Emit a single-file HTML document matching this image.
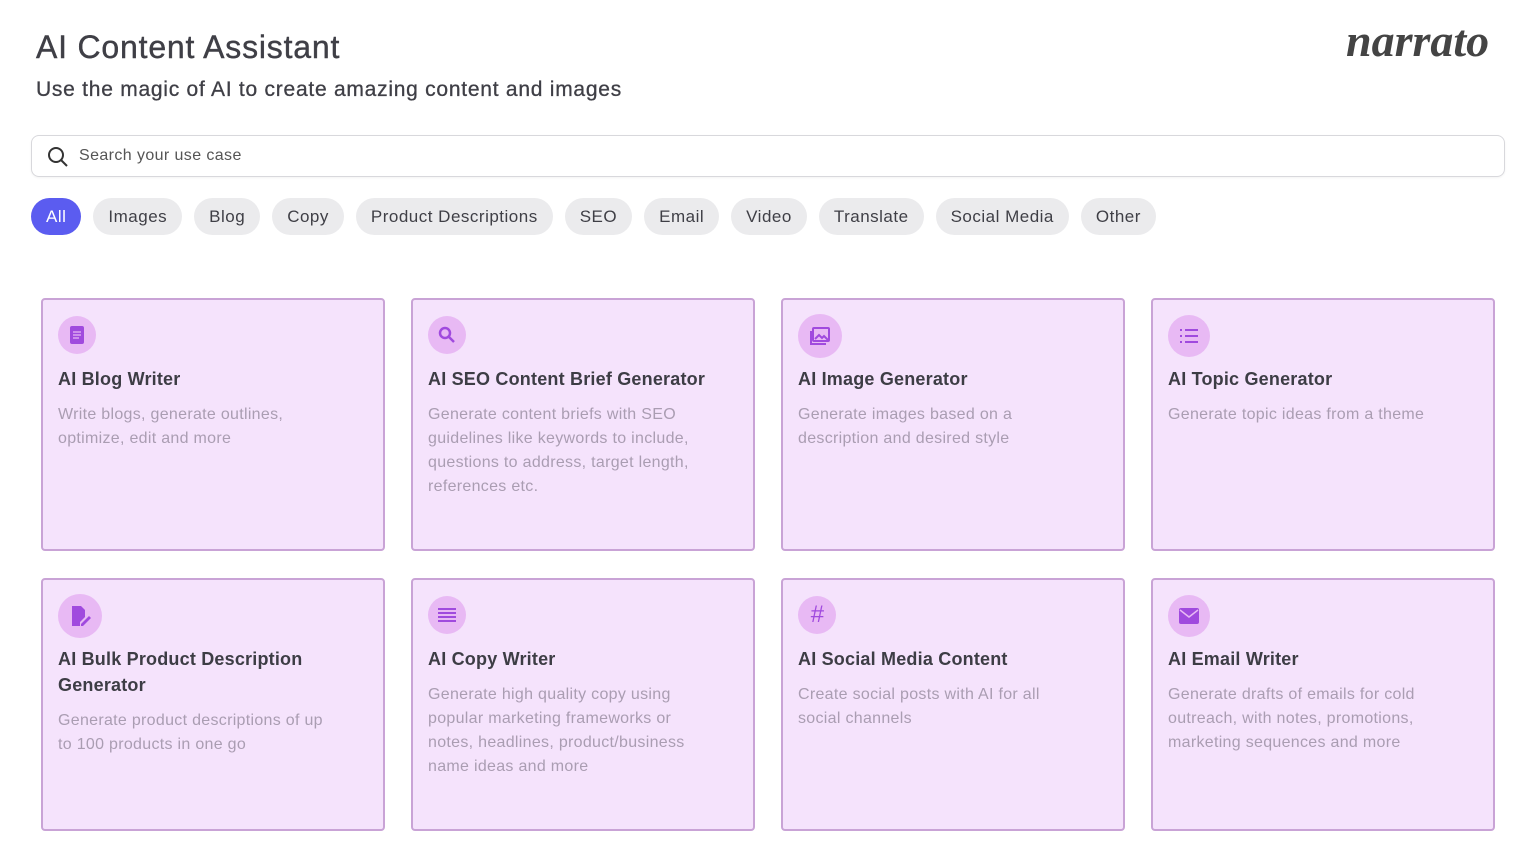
<!DOCTYPE html>
<html><head><meta charset="utf-8"><style>
*{box-sizing:border-box;margin:0;padding:0}
body{width:1536px;height:864px;background:#fff;font-family:"Liberation Sans",sans-serif;position:relative;overflow:hidden;color:#3d3d45}
h1{position:absolute;left:36px;top:29px;font-size:32px;font-weight:normal;color:#3f3f46;letter-spacing:0.8px;-webkit-text-stroke:0.4px #3f3f46}
.sub{position:absolute;left:36px;top:78px;font-size:21px;color:#3f3f46;letter-spacing:0.75px;-webkit-text-stroke:0.3px #3f3f46}
.logo{position:absolute;left:1346px;top:14px;font-family:"Liberation Serif",serif;font-style:italic;font-weight:bold;font-size:46px;color:#444;letter-spacing:0px}
.search{position:absolute;left:31px;top:135px;width:1474px;height:42px;border:1px solid #d8d8dc;border-radius:8px;box-shadow:0 1px 2px rgba(0,0,0,.05)}
.search span{position:absolute;left:47px;top:11px;font-size:16px;color:#555;letter-spacing:0.4px}
.search svg{position:absolute;left:14px;top:9px}
.tabs{position:absolute;left:31px;top:198px;display:flex;gap:12px}
.tab{height:37px;padding:0 15px;border-radius:19px;background:#ebebed;font-size:17px;line-height:37px;color:#3f3f46;letter-spacing:0.5px}
.tab.on{background:#5b5cf0;color:#fff;padding:0 15px}
.card{position:absolute;width:344px;height:253px;background:#f5e3fc;border:2px solid #c9a3d6;border-radius:4px;padding:16px 15px}
.icw{height:38px;position:relative}
.ic{position:absolute;left:0;top:0;width:38px;height:38px;border-radius:50%;background:#e8b9f4;display:flex;align-items:center;justify-content:center}
.card h3{font-size:18px;font-weight:bold;color:#3d3d45;margin-top:12px;line-height:26px;letter-spacing:0.2px;width:280px}
.card p{font-size:16px;color:#aa9db2;line-height:24px;margin-top:11px;letter-spacing:0.3px;width:300px}
</style></head><body>
<h1>AI Content Assistant</h1>
<div class="sub">Use the magic of AI to create amazing content and images</div>
<div class="logo">narrato</div>
<div class="search"><svg width="24" height="24" viewBox="0 0 24 24" fill="none" stroke="#333" stroke-width="2"><circle cx="10" cy="10" r="7"/><path d="M15 15l6 6"/></svg><span>Search your use case</span></div>
<div class="tabs"><div class="tab on">All</div><div class="tab">Images</div><div class="tab">Blog</div><div class="tab">Copy</div><div class="tab">Product Descriptions</div><div class="tab">SEO</div><div class="tab">Email</div><div class="tab">Video</div><div class="tab">Translate</div><div class="tab">Social Media</div><div class="tab">Other</div></div>

<div class="card" style="left:41px;top:298px"><div class="icw"><div class="ic"><svg width="18" height="20" viewBox="0 0 18 20"><rect x="2" y="1" width="14" height="18" rx="2" fill="#a04ade"/><path d="M5 7h8M5 10h8M5 13h6" stroke="#e8b9f4" stroke-width="1.3"/></svg></div></div><h3>AI Blog Writer</h3><p>Write blogs, generate outlines,<br>optimize, edit and more</p></div>
<div class="card" style="left:411px;top:298px"><div class="icw"><div class="ic"><svg width="20" height="20" viewBox="0 0 20 20" fill="none" stroke="#a04ade" stroke-width="2.5"><circle cx="8" cy="8" r="5"/><path d="M12 12l5 5"/></svg></div></div><h3>AI SEO Content Brief Generator</h3><p>Generate content briefs with SEO<br>guidelines like keywords to include,<br>questions to address, target length,<br>references etc.</p></div>
<div class="card" style="left:781px;top:298px"><div class="icw"><div class="ic" style="width:44px;height:44px;top:-2px"><svg width="22" height="20" viewBox="0 0 22 20" fill="none" stroke="#a04ade" stroke-width="2"><rect x="4" y="2" width="16" height="13" rx="1"/><path d="M2 5v13h15"/><path d="M6 13l4-4 3 3 2-2 4 4"/></svg></div></div><h3>AI Image Generator</h3><p>Generate images based on a<br>description and desired style</p></div>
<div class="card" style="left:1151px;top:298px"><div class="icw"><div class="ic" style="width:42px;height:42px;top:-1px"><svg width="20" height="16" viewBox="0 0 20 16" stroke="#a04ade" stroke-width="2"><path d="M1 2h2M1 8h2M1 14h2M6 2h13M6 8h13M6 14h13"/></svg></div></div><h3>AI Topic Generator</h3><p>Generate topic ideas from a theme</p></div>

<div class="card" style="left:41px;top:578px"><div class="icw"><div class="ic" style="width:44px;height:44px;top:-2px"><svg width="22" height="22" viewBox="0 0 22 22"><path d="M3 1h9l4 4v7l-5 5v4H3z" fill="#a04ade"/><path d="M12 19l8-8 2 2-8 8h-2z" fill="#a04ade"/></svg></div></div><h3>AI Bulk Product Description Generator</h3><p>Generate product descriptions of up<br>to 100 products in one go</p></div>
<div class="card" style="left:411px;top:578px"><div class="icw"><div class="ic"><svg width="18" height="16" viewBox="0 0 18 16" stroke="#a04ade" stroke-width="2"><path d="M0 2h18M0 6h18M0 10h18M0 14h18"/></svg></div></div><h3>AI Copy Writer</h3><p>Generate high quality copy using<br>popular marketing frameworks or<br>notes, headlines, product/business<br>name ideas and more</p></div>
<div class="card" style="left:781px;top:578px"><div class="icw"><div class="ic"><span style="color:#a04ade;font-size:24px;font-style:italic">#</span></div></div><h3>AI Social Media Content</h3><p>Create social posts with AI for all<br>social channels</p></div>
<div class="card" style="left:1151px;top:578px"><div class="icw"><div class="ic" style="width:42px;height:42px;top:-1px"><svg width="20" height="16" viewBox="0 0 20 16"><rect x="0" y="0" width="20" height="16" rx="2" fill="#a04ade"/><path d="M1 2l9 7 9-7" stroke="#e8b9f4" stroke-width="1.5" fill="none"/></svg></div></div><h3>AI Email Writer</h3><p>Generate drafts of emails for cold<br>outreach, with notes, promotions,<br>marketing sequences and more</p></div>
</body></html>
